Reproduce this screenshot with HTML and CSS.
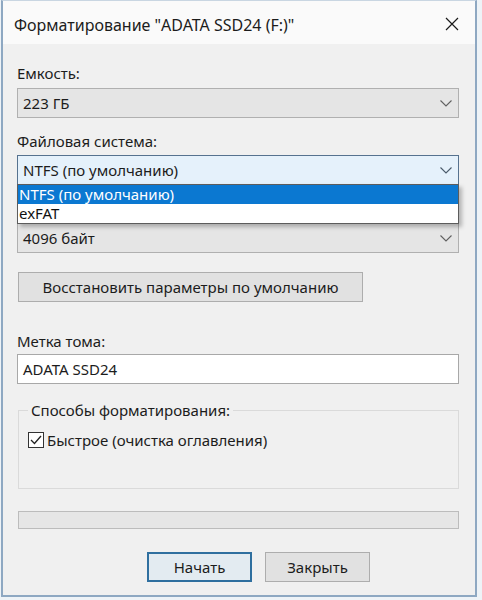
FILE: index.html
```html
<!DOCTYPE html>
<html lang="ru">
<head>
<meta charset="utf-8">
<title>Форматирование</title>
<link rel="stylesheet" href="styles.css">
</head>
<body>
<div class="window">
  <div class="titlebar">
    <span class="title">Форматирование "ADATA SSD24 (F:)"</span>
    <svg class="close" width="14" height="14" viewBox="0 0 14 14"><path d="M1 1 L13 13 M13 1 L1 13" stroke="#1a1a1a" stroke-width="1.2" fill="none"/></svg>
  </div>
  <div class="content">
    <div class="label l1">Емкость:</div>
    <div class="combo">
      <span>223 ГБ</span>
      <svg class="chev" width="12" height="7" viewBox="0 0 12 7"><path d="M0.5 0.5 L6 6 L11.5 0.5" stroke="#606060" stroke-width="1.1" fill="none"/></svg>
    </div>
    <div class="label l2">Файловая система:</div>
    <div class="combo active">
      <span>NTFS (по умолчанию)</span>
      <svg class="chev" width="12" height="7" viewBox="0 0 12 7"><path d="M0.5 0.5 L6 6 L11.5 0.5" stroke="#4a5a6a" stroke-width="1.1" fill="none"/></svg>
      <div class="dropdown">
        <div class="item selected">NTFS (по умолчанию)</div>
        <div class="item">exFAT</div>
      </div>
    </div>
    <div class="label l3"></div>
    <div class="combo c3">
      <span>4096 байт</span>
      <svg class="chev" width="12" height="7" viewBox="0 0 12 7"><path d="M0.5 0.5 L6 6 L11.5 0.5" stroke="#606060" stroke-width="1.1" fill="none"/></svg>
    </div>
    <button class="btn restore">Восстановить параметры по умолчанию</button>
    <div class="label l4">Метка тома:</div>
    <div class="textbox">ADATA SSD24</div>
    <fieldset class="group">
      <legend>Способы форматирования:</legend>
      <div class="check-row">
        <span class="checkbox"><svg width="14" height="14" viewBox="0 0 14 14"><path d="M2 7 L5.5 10.5 L12 3" stroke="#222" stroke-width="1.3" fill="none"/></svg></span>
        <span>Быстрое (очистка оглавления)</span>
      </div>
    </fieldset>
    <div class="progress"></div>
    <div class="buttons">
      <button class="btn default">Начать</button>
      <button class="btn">Закрыть</button>
    </div>
  </div>
</div>
</body>
</html>
```
FILE: styles.css
```css
html, body {
  margin: 0;
  padding: 0;
}
body {
  background: #eef3f7;
  font-family: "Noto Sans", "Open Sans", sans-serif;
  font-size: 15px;
  color: #1c1c1c;
  width: 482px;
  height: 600px;
  overflow: hidden;
}
.window {
  box-sizing: border-box;
  margin-left: 1px;
  width: 476px;
  height: 597px;
  background: #f0f0f0;
  border: 2px solid #8ea8c2;
  border-top: 1px solid #c9d6e2;
}
.titlebar {
  height: 43px;
  background: #fafafa;
  display: flex;
  align-items: center;
  justify-content: space-between;
  padding: 0 10px 0 11px;
  box-sizing: border-box;
}
.title {
  font-size: 16px;
  line-height: 20px;
  margin-top: 4px;
}
.close {
  margin-top: 2px;
  margin-right: 6px;
}
.content {
  padding: 0 16px 0 14px;
}
.label {
  line-height: 20px;
  height: 20px;
}
.l1 { padding-top: 19px; }
.l2 { margin-top: 13px; }
.l3 { margin-top: 12px; }
.l4 { margin-top: 29px; }
.combo {
  position: relative;
  box-sizing: border-box;
  height: 30px;
  margin-top: 5px;
  background: #e5e5e5;
  border: 1px solid #b0b0b0;
  display: flex;
  align-items: center;
  justify-content: space-between;
  padding: 0 6px 0 5px;
}
.combo.active {
  margin-top: 4px;
  background: #e5f1fb;
  border-color: #56728f;
}
.combo.c3 {
  margin-top: 6px;
}
.chev {
  display: block;
}
.dropdown {
  position: absolute;
  left: -1px;
  right: -1px;
  top: 28px;
  box-sizing: border-box;
  border: 1px solid #5c5c5c;
  background: #fff;
  box-shadow: 3px 3px 4px rgba(0,0,0,0.25);
  z-index: 2;
}
.item {
  height: 19px;
  line-height: 19px;
  padding-left: 1px;
  color: #111;
}
.item.selected {
  background: #0b78d1;
  color: #fff;
}
.btn {
  font-family: inherit;
  font-size: 15px;
  color: #1c1c1c;
  box-sizing: border-box;
  height: 30px;
  background: #e1e1e1;
  border: 1px solid #adadad;
  padding: 0;
  margin: 0;
}
.restore {
  display: block;
  margin-top: 19px;
  margin-left: 1px;
  width: 345px;
}
.textbox {
  box-sizing: border-box;
  height: 30px;
  margin-top: 3px;
  background: #fff;
  border: 1px solid #a8a8a8;
  line-height: 28px;
  padding-left: 5px;
}
.group {
  margin: 16px 0 0 1px;
  padding: 10px 9px 38px 9px;
  border: 1px solid #dadada;
  min-width: 0;
}
.group legend {
  padding: 0 3px;
  line-height: 20px;
}
.check-row {
  display: flex;
  align-items: center;
  height: 20px;
  gap: 3px;
}
.checkbox {
  box-sizing: border-box;
  width: 16px;
  height: 16px;
  border: 1px solid #333;
  background: #fff;
  display: flex;
  align-items: center;
  justify-content: center;
}
.checkbox svg { display: block; }
.progress {
  box-sizing: border-box;
  height: 18px;
  margin: 22px 0 0 1px;
  background: #e6e6e6;
  border: 1px solid #bcbcbc;
}
.buttons {
  display: flex;
  gap: 13px;
  margin-top: 23px;
  padding-left: 130px;
}
.buttons .btn {
  width: 105px;
}
.btn.default {
  border: 2px solid #2f6f9f;
  background: #e3ebf1;
}
```
